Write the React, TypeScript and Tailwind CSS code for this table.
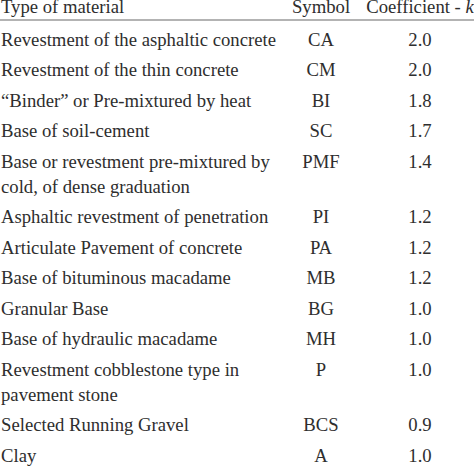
const rows: { name: string[]; sym: string; k: string }[] = [
  { name: ["Revestment of the asphaltic concrete"], sym: "CA", k: "2.0" },
  { name: ["Revestment of the thin concrete"], sym: "CM", k: "2.0" },
  { name: ["\u201CBinder\u201D or Pre-mixtured by heat"], sym: "BI", k: "1.8" },
  { name: ["Base of soil-cement"], sym: "SC", k: "1.7" },
  { name: ["Base or revestment pre-mixtured by", "cold, of dense graduation"], sym: "PMF", k: "1.4" },
  { name: ["Asphaltic revestment of penetration"], sym: "PI", k: "1.2" },
  { name: ["Articulate Pavement of concrete"], sym: "PA", k: "1.2" },
  { name: ["Base of bituminous macadame"], sym: "MB", k: "1.2" },
  { name: ["Granular Base"], sym: "BG", k: "1.0" },
  { name: ["Base of hydraulic macadame"], sym: "MH", k: "1.0" },
  { name: ["Revestment cobblestone type in", "pavement stone"], sym: "P", k: "1.0" },
  { name: ["Selected Running Gravel"], sym: "BCS", k: "0.9" },
  { name: ["Clay"], sym: "A", k: "1.0" },
];

export default function App() {
  return (
    <div className="w-[474px] h-[467px] overflow-hidden bg-white text-[#2e2e2e] font-['Liberation_Serif','Times_New_Roman',serif] text-[18.7px] leading-[25px]">
      <div className="w-[500px] -mt-[9px]">
        {/* Header */}
        <div className="flex pt-[3px] border-b-2 border-[#b3b3b3]">
          <div className="w-[286px] pl-px">Type of material</div>
          <div className="w-[70px] text-center">Symbol</div>
          <div className="w-[128px] text-center whitespace-nowrap">
            Coefficient - <span className="italic">k</span>
          </div>
        </div>

        {/* Rows */}
        <div className="pt-[3px]">
          {rows.map((r) => (
            <div key={r.sym + r.name[0]} className="flex py-[2.75px]">
              <div className="w-[286px] pl-px whitespace-nowrap">
                {r.name.map((line) => (
                  <div key={line}>{line}</div>
                ))}
              </div>
              <div className="w-[70px] text-center">{r.sym}</div>
              <div className="w-[128px] text-center">{r.k}</div>
            </div>
          ))}
        </div>
      </div>
    </div>
  );
}
